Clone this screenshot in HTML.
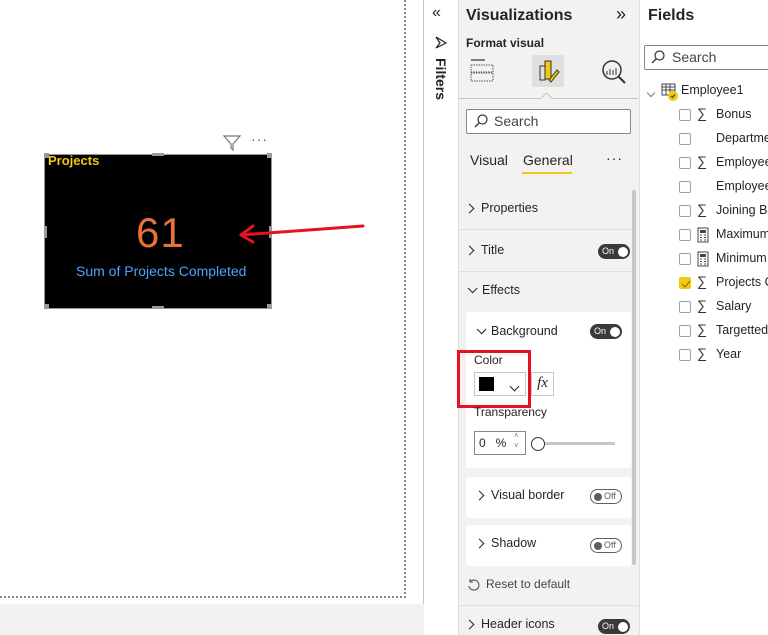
<!DOCTYPE html>
<html><head><style>
*{margin:0;padding:0;box-sizing:border-box}
body{width:768px;height:635px;overflow:hidden;background:#fff;font-family:"Segoe UI","Liberation Sans","DejaVu Sans",sans-serif;color:#252423;position:relative;font-size:13px}
.a{position:absolute;white-space:nowrap}
.tog{position:absolute;width:32px;height:15px;border-radius:8px;background:#3b3a39;color:#fff;font-size:9px;line-height:15px;padding-left:4px}
.tog::after{content:"";position:absolute;right:2px;top:2.5px;width:10px;height:10px;border-radius:50%;background:#fff}
.off{position:absolute;width:32px;height:15px;border-radius:8px;border:1px solid #605e5c;background:#fff;color:#605e5c;font-size:9px;line-height:13px;padding-left:13px}
.off::after{content:"";position:absolute;left:3px;top:2.5px;width:8px;height:8px;border-radius:50%;background:#605e5c}
.card{position:absolute;left:466px;width:165px;background:#fff;border-radius:3px}
.cb{position:absolute;left:679px;width:12px;height:12px;border:1px solid #a19f9d;border-radius:2px;background:#fff}
.sig{position:absolute;left:697px;font-size:14px;color:#323130;white-space:nowrap}
.fl{position:absolute;left:716px;font-size:12.5px;white-space:nowrap}
.chev{display:inline-block;width:7px;height:7px;border-right:1.3px solid #252423;border-bottom:1.3px solid #252423}
</style></head><body>
<!-- canvas -->
<div class="a" style="left:0;top:0;width:406px;height:598px;border-right:2px dotted #888;border-bottom:2px dotted #888"></div>
<div class="a" style="left:0;top:604px;width:424px;height:31px;background:#f3f2f1"></div>
<div class="a" style="left:44px;top:154px;width:228px;height:155px;background:#000;border:1px solid #999"></div>
<div class="a" style="left:48px;top:153px;color:#f2c811;font-size:13px;font-weight:bold">Projects</div>
<div class="a" style="left:136px;top:209px;color:#e8703a;font-size:42px;letter-spacing:1px">61</div>
<div class="a" style="left:76px;top:263px;color:#4aa3ff;font-size:14px">Sum of Projects Completed</div>
<div class="a" style="left:44px;top:153px;width:5px;height:5px;background:#999"></div>
<div class="a" style="left:267px;top:153px;width:5px;height:5px;background:#999"></div>
<div class="a" style="left:44px;top:304px;width:5px;height:5px;background:#999"></div>
<div class="a" style="left:267px;top:304px;width:5px;height:5px;background:#999"></div>
<div class="a" style="left:152px;top:153px;width:12px;height:3px;background:#999"></div>
<div class="a" style="left:152px;top:306px;width:12px;height:3px;background:#999"></div>
<div class="a" style="left:44px;top:226px;width:3px;height:12px;background:#999"></div>
<div class="a" style="left:269px;top:226px;width:3px;height:12px;background:#999"></div>
<svg class="a" style="left:222px;top:134px" width="20" height="18"><path d="M2 2H18L11 10V16L9 14V10Z" fill="none" stroke="#777" stroke-width="1.2"/></svg>
<div class="a" style="left:251px;top:131px;font-size:14px;color:#555;letter-spacing:1px">···</div>
<svg class="a" style="left:235px;top:220px" width="130" height="24"><path d="M128 6L6 15M6 15L18 6M6 15L18 22" fill="none" stroke="#e81123" stroke-width="3" stroke-linecap="round"/></svg>
<!-- filter strip -->
<div class="a" style="left:423px;top:0;width:1px;height:604px;background:#c8c6c4"></div>
<div class="a" style="left:432px;top:4px;font-size:16px">«</div>
<svg class="a" style="left:434px;top:36px" width="14" height="14"><path d="M2 1L12 7L2 12L6 7Z" fill="none" stroke="#252423" stroke-width="1.2"/></svg>
<div class="a" style="top:58px;font-size:14px;font-weight:bold;transform:rotate(90deg);transform-origin:0 0;left:449px">Filters</div>
<!-- viz pane -->
<div class="a" style="left:458px;top:0;width:181px;height:635px;background:#f3f2f1;border-left:1px solid #e1dfdd"></div>
<div class="a" style="left:466px;top:7px;font-size:16px;font-weight:bold">Visualizations</div>
<div class="a" style="left:616px;top:4px;font-size:18px">»</div>
<div class="a" style="left:466px;top:36px;font-size:12px;font-weight:bold">Format visual</div>
<svg class="a" style="left:469px;top:57px" width="26" height="28"><line x1="2" y1="3" x2="16" y2="3" stroke="#555" stroke-width="1.5"/><rect x="2" y="8" width="22" height="7" fill="none" stroke="#555" stroke-dasharray="1.5 1"/><rect x="2" y="16" width="22" height="8" fill="none" stroke="#555" stroke-dasharray="1.5 1"/></svg>
<div class="a" style="left:532px;top:55px;width:32px;height:32px;background:#e1dfdd;border-radius:2px"></div>
<svg class="a" style="left:536px;top:58px" width="26" height="28"><rect x="4" y="8" width="5" height="14" fill="none" stroke="#333"/><rect x="9" y="3" width="6" height="18" fill="#f2c811" stroke="#333"/><path d="M13 22L21 12L23 14L15 24Z" fill="#f2c811" stroke="#333"/></svg>
<svg class="a" style="left:600px;top:58px" width="28" height="28"><circle cx="12" cy="12" r="9" fill="none" stroke="#333" stroke-width="1.5"/><path d="M7 17V13M10 17V11M13 17V12M16 17V10" stroke="#333"/><line x1="18" y1="18" x2="25" y2="25" stroke="#333" stroke-width="2"/></svg>
<div class="a" style="left:458px;top:98px;width:180px;height:1px;background:#c8c6c4"></div>
<div class="a" style="left:542px;top:94px;width:9px;height:9px;background:#f3f2f1;border-left:1px solid #c8c6c4;border-top:1px solid #c8c6c4;transform:rotate(45deg)"></div>
<div class="a" style="left:466px;top:109px;width:165px;height:25px;background:#fff;border:1px solid #8a8886;border-radius:2px"></div>
<svg class="a" style="left:474px;top:114px" width="14" height="14"><circle cx="8.5" cy="5.5" r="4.5" fill="none" stroke="#333" stroke-width="1.2"/><line x1="5" y1="9" x2="1" y2="13" stroke="#333" stroke-width="1.3"/></svg>
<div class="a" style="left:494px;top:113px;font-size:14px;color:#444">Search</div>
<div class="a" style="left:470px;top:152px;font-size:14px">Visual</div>
<div class="a" style="left:523px;top:152px;font-size:14px">General</div>
<div class="a" style="left:522px;top:172px;width:50px;height:2px;background:#f2c811"></div>
<div class="a" style="left:606px;top:150px;font-size:14px;letter-spacing:1px">···</div>
<div class="a" style="left:632px;top:190px;width:4px;height:375px;background:#c8c6c4;border-radius:2px"></div>
<div class="a" style="left:466px;top:201px;font-size:12.5px"><span class="chev" style="transform:rotate(-45deg);margin-right:8px"></span>Properties</div>
<div class="a" style="left:458px;top:229px;width:174px;height:1px;background:#e1dfdd"></div>
<div class="a" style="left:466px;top:243px;font-size:12.5px"><span class="chev" style="transform:rotate(-45deg);margin-right:8px"></span>Title</div>
<div class="tog" style="left:598px;top:244px">On</div>
<div class="a" style="left:458px;top:271px;width:174px;height:1px;background:#e1dfdd"></div>
<div class="a" style="left:467px;top:283px;font-size:12.5px"><span class="chev" style="transform:rotate(45deg) translateY(-3px);margin-right:8px"></span>Effects</div>
<div class="card" style="top:312px;height:156px"></div>
<div class="a" style="left:476px;top:324px;font-size:12.5px"><span class="chev" style="transform:rotate(45deg) translateY(-3px);margin-right:8px"></span>Background</div>
<div class="tog" style="left:590px;top:324px">On</div>
<div class="a" style="left:474px;top:353px;font-size:12px">Color</div>
<div class="a" style="left:474px;top:372px;width:52px;height:24px;border:1px solid #c8c6c4;background:#fff"></div>
<div class="a" style="left:479px;top:377px;width:15px;height:14px;background:#000"></div>
<div class="a" style="left:511px;top:378px"><span class="chev" style="transform:rotate(45deg)"></span></div>
<div class="a" style="left:531px;top:372px;width:23px;height:24px;border:1px solid #c8c6c4;background:#fff;font-family:'Liberation Serif',serif;font-style:italic;font-size:15px;text-align:center;line-height:21px">fx</div>
<div class="a" style="left:457px;top:350px;width:74px;height:58px;border:3px solid #e81123"></div>
<div class="a" style="left:474px;top:405px;font-size:12px">Transparency</div>
<div class="a" style="left:474px;top:431px;width:52px;height:24px;border:1px solid #8a8886;background:#fff;font-size:12px;line-height:22px;padding-left:4px">0&nbsp;&nbsp;&nbsp;%</div>
<div class="a" style="left:514px;top:431px;font-size:8px;color:#777;line-height:10px">˄<br>˅</div>
<div class="a" style="left:544px;top:442px;width:71px;height:3px;background:#c8c6c4"></div>
<div class="a" style="left:531px;top:437px;width:14px;height:14px;border-radius:50%;border:1.5px solid #333;background:#fff"></div>
<div class="card" style="top:477px;height:41px"></div>
<div class="a" style="left:476px;top:488px;font-size:12.5px"><span class="chev" style="transform:rotate(-45deg);margin-right:8px"></span>Visual border</div>
<div class="off" style="left:590px;top:489px">Off</div>
<div class="card" style="top:525px;height:41px"></div>
<div class="a" style="left:476px;top:536px;font-size:12.5px"><span class="chev" style="transform:rotate(-45deg);margin-right:8px"></span>Shadow</div>
<div class="off" style="left:590px;top:538px">Off</div>
<svg class="a" style="left:467px;top:578px" width="14" height="14"><path d="M3 4A5 5 0 1 1 2 8M3 1V4H6" fill="none" stroke="#555" stroke-width="1.1"/></svg>
<div class="a" style="left:486px;top:577px;font-size:12px;color:#444">Reset to default</div>
<div class="a" style="left:458px;top:605px;width:180px;height:1px;background:#e1dfdd"></div>
<div class="a" style="left:466px;top:617px;font-size:12.5px"><span class="chev" style="transform:rotate(-45deg);margin-right:8px"></span>Header icons</div>
<div class="tog" style="left:598px;top:619px">On</div>
<!-- fields -->
<div class="a" style="left:639px;top:0;width:1px;height:635px;background:#e1dfdd"></div>
<div class="a" style="left:648px;top:7px;font-size:16px;font-weight:bold">Fields</div>
<div class="a" style="left:644px;top:45px;width:130px;height:25px;border:1px solid #8a8886;border-radius:2px;background:#fff"></div>
<svg class="a" style="left:651px;top:50px" width="14" height="14"><circle cx="8.5" cy="5.5" r="4.5" fill="none" stroke="#333" stroke-width="1.2"/><line x1="5" y1="9" x2="1" y2="13" stroke="#333" stroke-width="1.3"/></svg>
<div class="a" style="left:672px;top:49px;font-size:14px;color:#444">Search</div>
<div class="a" style="left:648px;top:84px"><span class="chev" style="transform:rotate(45deg);border-color:#777;width:6px;height:6px;border-width:1px"></span></div>
<svg class="a" style="left:661px;top:83px" width="18" height="20"><rect x="1" y="1" width="13" height="11" fill="none" stroke="#444"/><path d="M1 4H14M1 7H14M5 1V12M9 1V12" stroke="#444"/><circle cx="12" cy="13" r="5" fill="#f2c811"/><path d="M10 13L11.5 14.5L14 11.5" stroke="#333" fill="none"/></svg>
<div class="a" style="left:681px;top:83px;font-size:12.5px">Employee1</div>
<div class="cb" style="top:109px"></div><div class="sig" style="top:105px">∑</div><div class="fl" style="top:107px">Bonus</div>
<div class="cb" style="top:133px"></div><div class="fl" style="top:131px">Department</div>
<div class="cb" style="top:157px"></div><div class="sig" style="top:153px">∑</div><div class="fl" style="top:155px">Employee</div>
<div class="cb" style="top:181px"></div><div class="fl" style="top:179px">Employee</div>
<div class="cb" style="top:205px"></div><div class="sig" style="top:201px">∑</div><div class="fl" style="top:203px">Joining Bo</div>
<div class="cb" style="top:229px"></div><svg class="a" style="left:697px;top:227px" width="12" height="16"><rect x="1" y="1" width="10" height="14" fill="none" stroke="#444"/><rect x="3" y="3" width="6" height="3" fill="#444"/><path d="M3 8h2M7 8h2M3 10.5h2M7 10.5h2M3 13h2M7 13h2" stroke="#444"/></svg><div class="fl" style="top:227px">Maximum</div>
<div class="cb" style="top:253px"></div><svg class="a" style="left:697px;top:251px" width="12" height="16"><rect x="1" y="1" width="10" height="14" fill="none" stroke="#444"/><rect x="3" y="3" width="6" height="3" fill="#444"/><path d="M3 8h2M7 8h2M3 10.5h2M7 10.5h2M3 13h2M7 13h2" stroke="#444"/></svg><div class="fl" style="top:251px">Minimum</div>
<div class="cb" style="top:277px;background:#f2c811;border-color:#f2c811"></div><svg class="a" style="left:681px;top:280px" width="10" height="8"><path d="M1 4L4 7L9 1" stroke="#8a6d00" fill="none"/></svg><div class="sig" style="top:273px">∑</div><div class="fl" style="top:275px">Projects C</div>
<div class="cb" style="top:301px"></div><div class="sig" style="top:297px">∑</div><div class="fl" style="top:299px">Salary</div>
<div class="cb" style="top:325px"></div><div class="sig" style="top:321px">∑</div><div class="fl" style="top:323px">Targetted</div>
<div class="cb" style="top:349px"></div><div class="sig" style="top:345px">∑</div><div class="fl" style="top:347px">Year</div>
</body></html>
